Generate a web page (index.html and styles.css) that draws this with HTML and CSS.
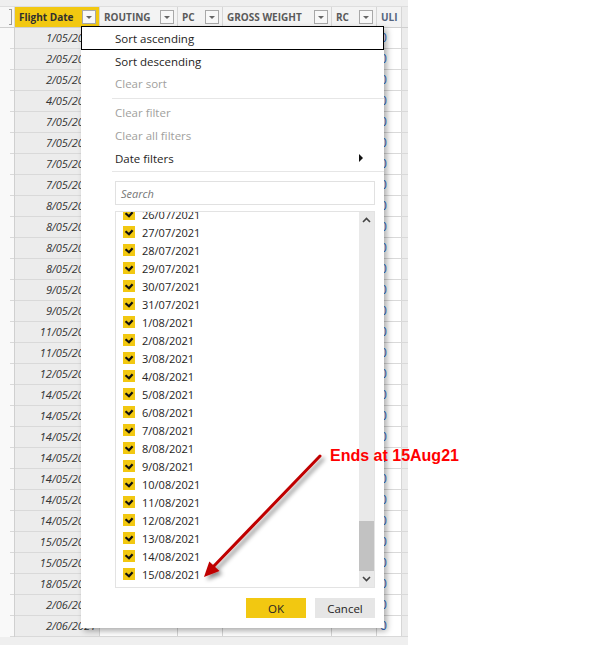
FILE: index.html
```html
<!DOCTYPE html>
<html>
<head>
<meta charset="utf-8">
<link rel="stylesheet" href="styles.css">
</head>
<body>
<div class="screen">
  <div class="grid">
    <div class="top"></div>
    <div class="hrow">
      <div class="h g"><span class="bracket"></span></div>
      <div class="h d sel"><span class="ht">Flight Date</span><span class="dd"></span></div>
      <div class="h r"><span class="ht">ROUTING</span><span class="dd"></span></div>
      <div class="h p"><span class="ht">PC</span><span class="dd"></span></div>
      <div class="h w"><span class="ht">GROSS WEIGHT</span><span class="dd"></span></div>
      <div class="h rc"><span class="ht">RC</span><span class="dd"></span></div>
      <div class="h u"><span class="ht uli">ULI</span></div>
      <div class="h s"></div>
    </div>
    <div class="row"><div class="c g"></div><div class="c d">1/05/2021</div><div class="c r"></div><div class="c p"></div><div class="c w"></div><div class="c rc"></div><div class="c u">0</div><div class="c s"></div></div>
    <div class="row"><div class="c g"></div><div class="c d">2/05/2021</div><div class="c r"></div><div class="c p"></div><div class="c w"></div><div class="c rc"></div><div class="c u">0</div><div class="c s"></div></div>
    <div class="row"><div class="c g"></div><div class="c d">2/05/2021</div><div class="c r"></div><div class="c p"></div><div class="c w"></div><div class="c rc"></div><div class="c u">0</div><div class="c s"></div></div>
    <div class="row"><div class="c g"></div><div class="c d">4/05/2021</div><div class="c r"></div><div class="c p"></div><div class="c w"></div><div class="c rc"></div><div class="c u">0</div><div class="c s"></div></div>
    <div class="row"><div class="c g"></div><div class="c d">7/05/2021</div><div class="c r"></div><div class="c p"></div><div class="c w"></div><div class="c rc"></div><div class="c u">0</div><div class="c s"></div></div>
    <div class="row"><div class="c g"></div><div class="c d">7/05/2021</div><div class="c r"></div><div class="c p"></div><div class="c w"></div><div class="c rc"></div><div class="c u">0</div><div class="c s"></div></div>
    <div class="row"><div class="c g"></div><div class="c d">7/05/2021</div><div class="c r"></div><div class="c p"></div><div class="c w"></div><div class="c rc"></div><div class="c u">0</div><div class="c s"></div></div>
    <div class="row"><div class="c g"></div><div class="c d">7/05/2021</div><div class="c r"></div><div class="c p"></div><div class="c w"></div><div class="c rc"></div><div class="c u">0</div><div class="c s"></div></div>
    <div class="row"><div class="c g"></div><div class="c d">8/05/2021</div><div class="c r"></div><div class="c p"></div><div class="c w"></div><div class="c rc"></div><div class="c u">0</div><div class="c s"></div></div>
    <div class="row"><div class="c g"></div><div class="c d">8/05/2021</div><div class="c r"></div><div class="c p"></div><div class="c w"></div><div class="c rc"></div><div class="c u">0</div><div class="c s"></div></div>
    <div class="row"><div class="c g"></div><div class="c d">8/05/2021</div><div class="c r"></div><div class="c p"></div><div class="c w"></div><div class="c rc"></div><div class="c u">0</div><div class="c s"></div></div>
    <div class="row"><div class="c g"></div><div class="c d">8/05/2021</div><div class="c r"></div><div class="c p"></div><div class="c w"></div><div class="c rc"></div><div class="c u">0</div><div class="c s"></div></div>
    <div class="row"><div class="c g"></div><div class="c d">9/05/2021</div><div class="c r"></div><div class="c p"></div><div class="c w"></div><div class="c rc"></div><div class="c u">0</div><div class="c s"></div></div>
    <div class="row"><div class="c g"></div><div class="c d">9/05/2021</div><div class="c r"></div><div class="c p"></div><div class="c w"></div><div class="c rc"></div><div class="c u">0</div><div class="c s"></div></div>
    <div class="row"><div class="c g"></div><div class="c d">11/05/2021</div><div class="c r"></div><div class="c p"></div><div class="c w"></div><div class="c rc"></div><div class="c u">0</div><div class="c s"></div></div>
    <div class="row"><div class="c g"></div><div class="c d">11/05/2021</div><div class="c r"></div><div class="c p"></div><div class="c w"></div><div class="c rc"></div><div class="c u">0</div><div class="c s"></div></div>
    <div class="row"><div class="c g"></div><div class="c d">12/05/2021</div><div class="c r"></div><div class="c p"></div><div class="c w"></div><div class="c rc"></div><div class="c u">0</div><div class="c s"></div></div>
    <div class="row"><div class="c g"></div><div class="c d">14/05/2021</div><div class="c r"></div><div class="c p"></div><div class="c w"></div><div class="c rc"></div><div class="c u">0</div><div class="c s"></div></div>
    <div class="row"><div class="c g"></div><div class="c d">14/05/2021</div><div class="c r"></div><div class="c p"></div><div class="c w"></div><div class="c rc"></div><div class="c u">0</div><div class="c s"></div></div>
    <div class="row"><div class="c g"></div><div class="c d">14/05/2021</div><div class="c r"></div><div class="c p"></div><div class="c w"></div><div class="c rc"></div><div class="c u">0</div><div class="c s"></div></div>
    <div class="row"><div class="c g"></div><div class="c d">14/05/2021</div><div class="c r"></div><div class="c p"></div><div class="c w"></div><div class="c rc"></div><div class="c u">0</div><div class="c s"></div></div>
    <div class="row"><div class="c g"></div><div class="c d">14/05/2021</div><div class="c r"></div><div class="c p"></div><div class="c w"></div><div class="c rc"></div><div class="c u">0</div><div class="c s"></div></div>
    <div class="row"><div class="c g"></div><div class="c d">14/05/2021</div><div class="c r"></div><div class="c p"></div><div class="c w"></div><div class="c rc"></div><div class="c u">0</div><div class="c s"></div></div>
    <div class="row"><div class="c g"></div><div class="c d">14/05/2021</div><div class="c r"></div><div class="c p"></div><div class="c w"></div><div class="c rc"></div><div class="c u">0</div><div class="c s"></div></div>
    <div class="row"><div class="c g"></div><div class="c d">15/05/2021</div><div class="c r"></div><div class="c p"></div><div class="c w"></div><div class="c rc"></div><div class="c u">0</div><div class="c s"></div></div>
    <div class="row"><div class="c g"></div><div class="c d">15/05/2021</div><div class="c r"></div><div class="c p"></div><div class="c w"></div><div class="c rc"></div><div class="c u">0</div><div class="c s"></div></div>
    <div class="row"><div class="c g"></div><div class="c d">18/05/2021</div><div class="c r"></div><div class="c p"></div><div class="c w"></div><div class="c rc"></div><div class="c u">0</div><div class="c s"></div></div>
    <div class="row"><div class="c g"></div><div class="c d">2/06/2021</div><div class="c r"></div><div class="c p"></div><div class="c w"></div><div class="c rc"></div><div class="c u">0</div><div class="c s"></div></div>
    <div class="row"><div class="c g"></div><div class="c d">2/06/2021</div><div class="c r"></div><div class="c p"></div><div class="c w"></div><div class="c rc"></div><div class="c u">0</div><div class="c s"></div></div>
    <div class="bottom"></div>
  </div>

  <div class="popup">
    <div class="mi first">Sort ascending</div>
    <div class="mi i2">Sort descending</div>
    <div class="mi dis">Clear sort</div>
    <div class="sep"></div>
    <div class="mi dis">Clear filter</div>
    <div class="mi dis">Clear all filters</div>
    <div class="mi i2">Date filters<span class="tri"></span></div>
    <div class="sep sep2"></div>
    <div class="search">Search</div>
    <div class="list">
      <div class="items">
        <div class="it"><span class="cb"><svg viewBox="0 0 12 12" width="12" height="12"><polyline points="2.5,5.2 6,8.3 9.6,4.2" fill="none" stroke="#111" stroke-width="2.2"/></svg></span>26/07/2021</div>
        <div class="it"><span class="cb"><svg viewBox="0 0 12 12" width="12" height="12"><polyline points="2.5,5.2 6,8.3 9.6,4.2" fill="none" stroke="#111" stroke-width="2.2"/></svg></span>27/07/2021</div>
        <div class="it"><span class="cb"><svg viewBox="0 0 12 12" width="12" height="12"><polyline points="2.5,5.2 6,8.3 9.6,4.2" fill="none" stroke="#111" stroke-width="2.2"/></svg></span>28/07/2021</div>
        <div class="it"><span class="cb"><svg viewBox="0 0 12 12" width="12" height="12"><polyline points="2.5,5.2 6,8.3 9.6,4.2" fill="none" stroke="#111" stroke-width="2.2"/></svg></span>29/07/2021</div>
        <div class="it"><span class="cb"><svg viewBox="0 0 12 12" width="12" height="12"><polyline points="2.5,5.2 6,8.3 9.6,4.2" fill="none" stroke="#111" stroke-width="2.2"/></svg></span>30/07/2021</div>
        <div class="it"><span class="cb"><svg viewBox="0 0 12 12" width="12" height="12"><polyline points="2.5,5.2 6,8.3 9.6,4.2" fill="none" stroke="#111" stroke-width="2.2"/></svg></span>31/07/2021</div>
        <div class="it"><span class="cb"><svg viewBox="0 0 12 12" width="12" height="12"><polyline points="2.5,5.2 6,8.3 9.6,4.2" fill="none" stroke="#111" stroke-width="2.2"/></svg></span>1/08/2021</div>
        <div class="it"><span class="cb"><svg viewBox="0 0 12 12" width="12" height="12"><polyline points="2.5,5.2 6,8.3 9.6,4.2" fill="none" stroke="#111" stroke-width="2.2"/></svg></span>2/08/2021</div>
        <div class="it"><span class="cb"><svg viewBox="0 0 12 12" width="12" height="12"><polyline points="2.5,5.2 6,8.3 9.6,4.2" fill="none" stroke="#111" stroke-width="2.2"/></svg></span>3/08/2021</div>
        <div class="it"><span class="cb"><svg viewBox="0 0 12 12" width="12" height="12"><polyline points="2.5,5.2 6,8.3 9.6,4.2" fill="none" stroke="#111" stroke-width="2.2"/></svg></span>4/08/2021</div>
        <div class="it"><span class="cb"><svg viewBox="0 0 12 12" width="12" height="12"><polyline points="2.5,5.2 6,8.3 9.6,4.2" fill="none" stroke="#111" stroke-width="2.2"/></svg></span>5/08/2021</div>
        <div class="it"><span class="cb"><svg viewBox="0 0 12 12" width="12" height="12"><polyline points="2.5,5.2 6,8.3 9.6,4.2" fill="none" stroke="#111" stroke-width="2.2"/></svg></span>6/08/2021</div>
        <div class="it"><span class="cb"><svg viewBox="0 0 12 12" width="12" height="12"><polyline points="2.5,5.2 6,8.3 9.6,4.2" fill="none" stroke="#111" stroke-width="2.2"/></svg></span>7/08/2021</div>
        <div class="it"><span class="cb"><svg viewBox="0 0 12 12" width="12" height="12"><polyline points="2.5,5.2 6,8.3 9.6,4.2" fill="none" stroke="#111" stroke-width="2.2"/></svg></span>8/08/2021</div>
        <div class="it"><span class="cb"><svg viewBox="0 0 12 12" width="12" height="12"><polyline points="2.5,5.2 6,8.3 9.6,4.2" fill="none" stroke="#111" stroke-width="2.2"/></svg></span>9/08/2021</div>
        <div class="it"><span class="cb"><svg viewBox="0 0 12 12" width="12" height="12"><polyline points="2.5,5.2 6,8.3 9.6,4.2" fill="none" stroke="#111" stroke-width="2.2"/></svg></span>10/08/2021</div>
        <div class="it"><span class="cb"><svg viewBox="0 0 12 12" width="12" height="12"><polyline points="2.5,5.2 6,8.3 9.6,4.2" fill="none" stroke="#111" stroke-width="2.2"/></svg></span>11/08/2021</div>
        <div class="it"><span class="cb"><svg viewBox="0 0 12 12" width="12" height="12"><polyline points="2.5,5.2 6,8.3 9.6,4.2" fill="none" stroke="#111" stroke-width="2.2"/></svg></span>12/08/2021</div>
        <div class="it"><span class="cb"><svg viewBox="0 0 12 12" width="12" height="12"><polyline points="2.5,5.2 6,8.3 9.6,4.2" fill="none" stroke="#111" stroke-width="2.2"/></svg></span>13/08/2021</div>
        <div class="it"><span class="cb"><svg viewBox="0 0 12 12" width="12" height="12"><polyline points="2.5,5.2 6,8.3 9.6,4.2" fill="none" stroke="#111" stroke-width="2.2"/></svg></span>14/08/2021</div>
        <div class="it"><span class="cb"><svg viewBox="0 0 12 12" width="12" height="12"><polyline points="2.5,5.2 6,8.3 9.6,4.2" fill="none" stroke="#111" stroke-width="2.2"/></svg></span>15/08/2021</div>
      </div>
      <div class="sbar">
        <div class="sbtn"><svg viewBox="0 0 9 6" width="9" height="6"><polyline points="1,5 4.5,1.5 8,5" fill="none" stroke="#444" stroke-width="1.6"/></svg></div>
        <div class="track"><div class="thumb"></div></div>
        <div class="sbtn"><svg viewBox="0 0 9 6" width="9" height="6"><polyline points="1,1 4.5,4.5 8,1" fill="none" stroke="#444" stroke-width="1.6"/></svg></div>
      </div>
    </div>
    <div class="btns">
      <div class="btn ok">OK</div>
      <div class="btn cancel">Cancel</div>
    </div>
  </div>

  <div class="note">Ends at 15Aug21</div>
  <svg class="arrow" viewBox="0 0 593 645" width="593" height="645">
    <defs>
      <filter id="sh" x="-30%" y="-30%" width="160%" height="160%">
        <feDropShadow dx="3" dy="3" stdDeviation="2" flood-color="#000" flood-opacity="0.45"/>
      </filter>
    </defs>
    <g filter="url(#sh)">
      <line x1="320" y1="456" x2="213" y2="567" stroke="#c00000" stroke-width="3" stroke-linecap="round"/>
      <polygon points="204,577 209.3,561.4 219.5,571" fill="#c00000"/>
    </g>
  </svg>
</div>
</body>
</html>
```

FILE: styles.css
```css
html, body {
  margin: 0;
  padding: 0;
  background: #ffffff;
}

body {
  font-family: "Open Sans", "Noto Sans", "DejaVu Sans", sans-serif;
  color: #252423;
}

.screen {
  position: relative;
  width: 593px;
  height: 645px;
  overflow: hidden;
  background: #ffffff;
}

/* ---------- data grid ---------- */
.grid {
  width: 408px;
  background: #ffffff;
}

.top {
  height: 7px;
  background: #efefef;
  border-bottom: 1px solid #dedede;
  box-sizing: border-box;
}

.hrow,
.row {
  display: flex;
  height: 21px;
  box-sizing: border-box;
}

.hrow {
  background: #f3f3f3;
  border-bottom: 1px solid #cfcfcf;
}

.row {
  border-bottom: 1px solid #d9d9d9;
}

.h,
.c {
  box-sizing: border-box;
  height: 100%;
  border-right: 1px solid #d6d6d6;
  overflow: hidden;
  flex: none;
}

.g { width: 15px; }
.d { width: 85px; }
.r { width: 78px; }
.p { width: 45px; }
.w { width: 109px; }
.rc { width: 45px; }
.u { width: 25px; }
.s { width: 6px; border-right: none; background: #ececec; }

.h {
  display: flex;
  align-items: center;
  padding-left: 4px;
  font-size: 10px;
  font-weight: 700;
  color: #5a5a5a;
  white-space: nowrap;
}

.h.g {
  padding-left: 0;
  background: #f7f7f7;
  justify-content: flex-end;
  padding-right: 2px;
}

.bracket {
  width: 2px;
  height: 14px;
  border: 1px solid #9a9a9a;
  border-left: none;
}

.h.sel {
  background: #f2c811;
  color: #2f2f2f;
  padding-left: 4px;
}

.ht {
  flex: 1;
}

.ht.uli {
  color: #55647e;
}

.dd {
  width: 14px;
  height: 14px;
  box-sizing: border-box;
  margin-right: 3px;
  border: 1px solid #a8a8a8;
  background: #f8f8f8;
  display: flex;
  align-items: center;
  justify-content: center;
}

.dd::after {
  content: "";
  border-left: 3px solid transparent;
  border-right: 3px solid transparent;
  border-top: 3px solid #666;
}

.c {
  font-size: 11px;
  line-height: 20px;
  white-space: nowrap;
}

.c.g {
  height: 21px;
  border-right-color: #d0d0d0;
  background: linear-gradient(#d9d9d9, #d9d9d9) right bottom / 4px 1px no-repeat, #f9f9f9;
}

.c.d {
  background: #ececec;
  font-style: italic;
  color: #333333;
  text-align: right;
  padding-right: 3px;
}

.c.u {
  color: #2b66c4;
  padding-left: 3px;
  font-size: 12px;
}

.bottom {
  height: 8px;
  background: #efefef;
}

/* ---------- filter popup ---------- */
.popup {
  position: absolute;
  left: 81px;
  top: 26px;
  width: 303px;
  height: 602px;
  box-sizing: border-box;
  background: #ffffff;
  box-shadow: 3px 3px 6px rgba(0, 0, 0, 0.32);
  display: flex;
  flex-direction: column;
  z-index: 5;
}

.mi {
  height: 23px;
  display: flex;
  align-items: center;
  padding-left: 34px;
  font-size: 11.5px;
  color: #252423;
  box-sizing: border-box;
}

.mi.first {
  height: 24px;
  border: 1px solid #000000;
  padding-left: 33px;
}

.mi.i2 {
  height: 22px;
}

.mi.dis {
  color: #a19f9d;
}

.tri {
  margin-left: auto;
  margin-right: 21px;
  border-left: 4px solid #111;
  border-top: 4px solid transparent;
  border-bottom: 4px solid transparent;
}

.sep {
  height: 1px;
  background: #e6e6e6;
  margin: 3px 0 2px 31px;
}

.sep.sep2 {
  margin: 2px 0 0 31px;
}

.search {
  margin: 9px 9px 0 34px;
  height: 24px;
  box-sizing: border-box;
  border: 1px solid #e1e1e1;
  padding-left: 5px;
  display: flex;
  align-items: center;
  font-size: 11px;
  font-style: italic;
  color: #767676;
}

.list {
  margin: 6px 9px 0 34px;
  height: 377px;
  box-sizing: border-box;
  border: 1px solid #e3e3e3;
  display: flex;
  overflow: hidden;
}

.items {
  flex: 1;
  margin-top: -7px;
}

.it {
  height: 18px;
  display: flex;
  align-items: center;
  padding-left: 7px;
  font-size: 11px;
  color: #252423;
}

.cb {
  width: 12px;
  height: 12px;
  background: #f2c811;
  margin-right: 7px;
  display: flex;
}

.sbar {
  width: 15px;
  background: #e9e9e9;
  display: flex;
  flex-direction: column;
}

.sbtn {
  height: 16px;
  display: flex;
  align-items: center;
  justify-content: center;
}

.track {
  flex: 1;
  display: flex;
  flex-direction: column;
  justify-content: flex-end;
}

.thumb {
  height: 50px;
  background: #c2c2c2;
}

.btns {
  margin-top: 10px;
  display: flex;
  justify-content: flex-end;
  gap: 9px;
  padding-right: 9px;
}

.btn {
  width: 60px;
  height: 20px;
  display: flex;
  align-items: center;
  justify-content: center;
  font-size: 11.5px;
  color: #252423;
}

.btn.ok {
  background: #f2c811;
}

.btn.cancel {
  background: #e6e6e6;
}

/* ---------- annotation ---------- */
.note {
  position: absolute;
  left: 330px;
  top: 448px;
  font-family: "Liberation Sans", Arial, sans-serif;
  font-weight: 700;
  font-size: 16px;
  line-height: 16px;
  color: #ff0000;
  white-space: nowrap;
  z-index: 6;
}

.arrow {
  position: absolute;
  left: 0;
  top: 0;
  pointer-events: none;
  z-index: 7;
}
```
